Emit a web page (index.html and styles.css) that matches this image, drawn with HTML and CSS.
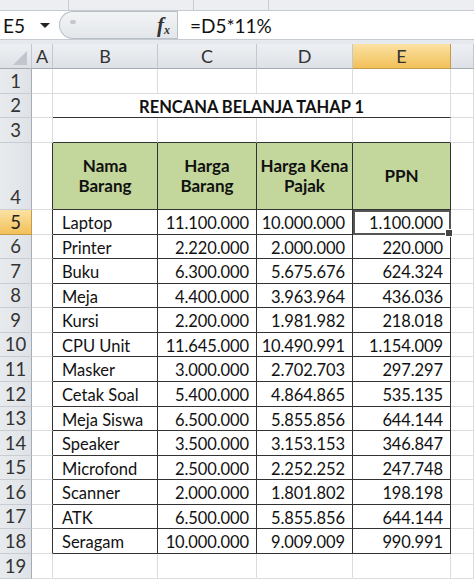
FILE: index.html
```html
<!DOCTYPE html>
<html>
<head>
<meta charset="utf-8">
<link rel="stylesheet" href="styles.css">
</head>
<body>
<div class="ribbon"><span class="rb r1"></span><span class="rb r2"></span><span class="rb r3"></span></div>
<div class="fbar">
  <div class="namebox"><span>E5</span><span class="dd"></span></div>
  <div class="pill"><span class="grip"></span><span class="fx">f<sub>x</sub></span></div>
  <div class="formula">=D5*11%</div>
</div>
<div class="gap"></div>
<div class="sheet">
  <div class="row h25 hdr">
    <div class="ch corner"><span class="tri"></span></div>
    <div class="ch">A</div><div class="ch">B</div><div class="ch">C</div><div class="ch">D</div><div class="ch on">E</div><div class="ch"></div>
  </div>
  <div class="row h25"><div class="rh">1</div><div class="c"></div><div class="c"></div><div class="c"></div><div class="c"></div><div class="c"></div><div class="c"></div></div>
  <div class="row h24"><div class="rh">2</div><div class="c"></div><div class="c title">RENCANA BELANJA TAHAP 1</div><div class="c"></div></div>
  <div class="row h25"><div class="rh">3</div><div class="c"></div><div class="c bb"></div><div class="c bb"></div><div class="c bb"></div><div class="c bb"></div><div class="c"></div></div>
  <div class="row h67"><div class="rh">4</div><div class="c bl"></div><div class="c t hd">Nama<br>Barang</div><div class="c t hd">Harga<br>Barang</div><div class="c t hd">Harga Kena<br>Pajak</div><div class="c t hd">PPN</div><div class="c"></div></div>
  <div class="row h25"><div class="rh on">5</div><div class="c bl"></div><div class="c t l">Laptop</div><div class="c t n">11.100.000</div><div class="c t n">10.000.000</div><div class="c t n sel">1.100.000</div><div class="c"></div></div>
  <div class="row h24"><div class="rh">6</div><div class="c bl"></div><div class="c t l">Printer</div><div class="c t n">2.220.000</div><div class="c t n">2.000.000</div><div class="c t n">220.000</div><div class="c"></div></div>
  <div class="row h25"><div class="rh">7</div><div class="c bl"></div><div class="c t l">Buku</div><div class="c t n">6.300.000</div><div class="c t n">5.675.676</div><div class="c t n">624.324</div><div class="c"></div></div>
  <div class="row h24"><div class="rh">8</div><div class="c bl"></div><div class="c t l">Meja</div><div class="c t n">4.400.000</div><div class="c t n">3.963.964</div><div class="c t n">436.036</div><div class="c"></div></div>
  <div class="row h25"><div class="rh">9</div><div class="c bl"></div><div class="c t l">Kursi</div><div class="c t n">2.200.000</div><div class="c t n">1.981.982</div><div class="c t n">218.018</div><div class="c"></div></div>
  <div class="row h24"><div class="rh">10</div><div class="c bl"></div><div class="c t l">CPU Unit</div><div class="c t n">11.645.000</div><div class="c t n">10.490.991</div><div class="c t n">1.154.009</div><div class="c"></div></div>
  <div class="row h25"><div class="rh">11</div><div class="c bl"></div><div class="c t l">Masker</div><div class="c t n">3.000.000</div><div class="c t n">2.702.703</div><div class="c t n">297.297</div><div class="c"></div></div>
  <div class="row h25"><div class="rh">12</div><div class="c bl"></div><div class="c t l">Cetak Soal</div><div class="c t n">5.400.000</div><div class="c t n">4.864.865</div><div class="c t n">535.135</div><div class="c"></div></div>
  <div class="row h24"><div class="rh">13</div><div class="c bl"></div><div class="c t l">Meja Siswa</div><div class="c t n">6.500.000</div><div class="c t n">5.855.856</div><div class="c t n">644.144</div><div class="c"></div></div>
  <div class="row h25"><div class="rh">14</div><div class="c bl"></div><div class="c t l">Speaker</div><div class="c t n">3.500.000</div><div class="c t n">3.153.153</div><div class="c t n">346.847</div><div class="c"></div></div>
  <div class="row h24"><div class="rh">15</div><div class="c bl"></div><div class="c t l">Microfond</div><div class="c t n">2.500.000</div><div class="c t n">2.252.252</div><div class="c t n">247.748</div><div class="c"></div></div>
  <div class="row h25"><div class="rh">16</div><div class="c bl"></div><div class="c t l">Scanner</div><div class="c t n">2.000.000</div><div class="c t n">1.801.802</div><div class="c t n">198.198</div><div class="c"></div></div>
  <div class="row h24"><div class="rh">17</div><div class="c bl"></div><div class="c t l">ATK</div><div class="c t n">6.500.000</div><div class="c t n">5.855.856</div><div class="c t n">644.144</div><div class="c"></div></div>
  <div class="row h25"><div class="rh">18</div><div class="c bl"></div><div class="c t l">Seragam</div><div class="c t n">10.000.000</div><div class="c t n">9.009.009</div><div class="c t n">990.991</div><div class="c"></div></div>
  <div class="row h25"><div class="rh">19</div><div class="c"></div><div class="c"></div><div class="c"></div><div class="c"></div><div class="c"></div><div class="c"></div></div>
</div>
</body>
</html>
```

FILE: styles.css
```css
* { box-sizing: border-box; margin: 0; padding: 0; }
body {
  width: 474px; height: 579px; overflow: hidden; background: #fff;
  font-family: Lato, "Open Sans", sans-serif; color: #111;
}
.ribbon { height: 11px; background: #eceef1; border-bottom: 1px solid #c6cbd1; display: flex; }
.rb { width: 1px; background: #c9cdd2; height: 10px; }
.r1 { margin-left: 68px; }
.r2 { margin-left: 124px; }
.r3 { margin-left: 74px; }
.fbar { height: 29px; display: flex; background: #fff; border-bottom: 1px solid #c6cbd1; }
.namebox { width: 59px; display: flex; align-items: center; padding-left: 3px; font-size: 19px; color: #111; }
.dd { margin-left: auto; margin-right: 9px; width: 0; height: 0;
  border-left: 5px solid transparent; border-right: 5px solid transparent; border-top: 5px solid #222; }
.pill { width: 118px; background: linear-gradient(#f2f4f6, #e3e6ea); border: 1px solid #b9bfc6; border-right: none;
  border-radius: 14px 0 0 14px; display: flex; align-items: center; padding-left: 10px; }
.grip { width: 6px; height: 4px; border-radius: 2px; background: #c3c8ce; margin-top: -6px; }
.fx { margin-left: auto; margin-right: 7px; font-family: "Liberation Serif", serif; font-style: italic;
  font-weight: bold; font-size: 21px; color: #333; line-height: 1; }
.fx sub { font-size: 12px; vertical-align: -2px; }
.formula { flex: 1; border-left: 1px solid #b9bfc6; padding-left: 12px; display: flex; align-items: center; font-size: 19px; }
.gap { height: 4px; background: #e6e9ed; }
.row { display: grid; grid-template-columns: 32px 21px 105px 99px 96px 98px 23px; }
.h24 { height: 24px; }
.h25 { height: 25px; }
.h67 { height: 67px; }
.ch { background: linear-gradient(#eef0f3, #dde1e6); border-right: 1px solid #c3c8ce; border-bottom: 1px solid #a5acb4;
  display: flex; align-items: center; justify-content: center; font-size: 18px; color: #333; }
.ch.on { background: linear-gradient(#fbe2a3, #f2c059); border-right-color: #c49b4a; border-bottom-color: #c49b4a; }
.corner { justify-content: flex-end; align-items: flex-end; padding: 0 4px 3px 0; }
.tri { width: 0; height: 0; border-left: 14px solid transparent; border-bottom: 14px solid #c1c6cc; }
.rh { background: linear-gradient(90deg, #e8ebee, #dfe3e7); border-right: 1px solid #a5acb4; border-bottom: 1px solid #c8cdd3;
  display: flex; align-items: flex-end; justify-content: center; font-size: 18.5px; line-height: 22px; color: #333; padding-bottom: 1px; }
.rh.on { background: linear-gradient(#fbe2a3, #f2c059); border-right-color: #c49b4a; border-bottom-color: #c49b4a; color: #222; }
.c { border-right: 1px solid #dadcdd; border-bottom: 1px solid #dadcdd; display: flex; align-items: center;
  font-size: 16.5px; white-space: nowrap; }
.l { padding-left: 9px; padding-top: 2px; }
.n { justify-content: flex-end; padding-right: 7px; padding-top: 2px; letter-spacing: -0.1px; }
.bl { border-right-color: #333; }
.bb { border-bottom-color: #333; }
.t { border-right-color: #333; border-bottom-color: #333; }
.hd { background: #c3d69b; font-weight: bold; justify-content: center; text-align: center; line-height: 20px;
  white-space: normal; font-size: 17px; }
.title { grid-column: span 4; font-weight: bold; justify-content: center; border-bottom-color: #333; padding-top: 2px; font-size: 16.5px; }
.sel { position: relative; z-index: 1; outline: 2px solid #555; outline-offset: -2px; }
.sel::after { content: ""; position: absolute; right: -3px; bottom: -3px; width: 6px; height: 6px;
  background: #444; border: 1px solid #fff; }
```
